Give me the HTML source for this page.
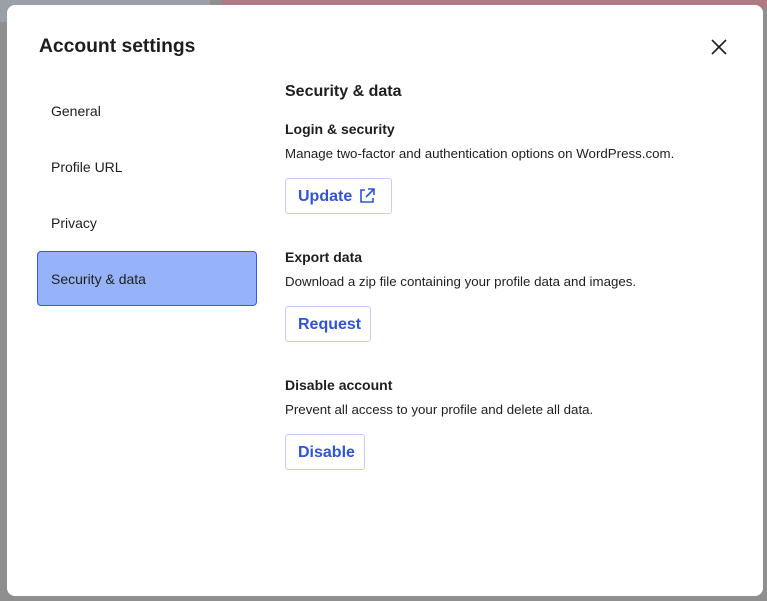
<!DOCTYPE html>
<html><head><meta charset="utf-8"><style>
html,body{margin:0;padding:0;width:767px;height:601px;overflow:hidden;background:#8f8f8f;font-family:"Liberation Sans",sans-serif;}
.topl{position:absolute;left:0;top:0;width:210px;height:22px;background:#9aa0a8}
.topr{position:absolute;left:222px;top:0;width:545px;height:8px;background:#b07a84}
.modal{position:absolute;left:7px;top:5px;width:756px;height:591px;background:#fff;border-radius:8px;}
.t{position:absolute;white-space:nowrap;color:#1e1e1e}
h1{position:absolute;left:32px;top:31px;margin:0;font-size:19.3px;font-weight:bold;color:#1e1e1e}
.nav{position:absolute;left:44px;font-size:14px;color:#1e1e1e}
.sel{position:absolute;left:30px;top:246px;width:220px;height:55px;box-sizing:border-box;background:#96b3fa;border:1.5px solid #3858e9;border-radius:4px}
.btn{position:absolute;left:278px;height:36px;border:1px solid #c5cff5;border-radius:3px;color:#2f55d4;font-size:16px;font-weight:bold;line-height:36px;padding:0 12px;box-sizing:border-box}
.h{font-size:14px;font-weight:bold}
.p{font-size:13.3px}
</style></head><body>
<div class="topl"></div><div class="topr"></div>
<div class="modal">
<h1>Account settings</h1>
<svg style="position:absolute;left:704px;top:34px" width="16" height="16" viewBox="0 0 16 16"><path d="M1 1L15 15M15 1L1 15" stroke="#1e1e1e" stroke-width="1.6"/></svg>
<div class="nav" style="top:98px">General</div>
<div class="nav" style="top:154px">Profile URL</div>
<div class="nav" style="top:210px">Privacy</div>
<div class="sel"></div>
<div class="nav" style="top:266px">Security &amp; data</div>
<div class="t" style="left:278px;top:78px;font-size:16px;font-weight:bold">Security &amp; data</div>
<div class="t h" style="left:278px;top:116px">Login &amp; security</div>
<div class="t p" style="left:278px;top:141px">Manage two-factor and authentication options on WordPress.com.</div>
<div class="btn" style="top:173px;width:107px">Update
<svg style="position:absolute;left:73px;top:9px" width="16" height="16" viewBox="0 0 16 16" fill="none" stroke="#2f55d4" stroke-width="1.6"><path d="M6 2H2v12h12v-4M9 1h6v6M15 1L7 9"/></svg></div>
<div class="t h" style="left:278px;top:244px">Export data</div>
<div class="t p" style="left:278px;top:269px">Download a zip file containing your profile data and images.</div>
<div class="btn" style="top:301px;width:86px">Request</div>
<div class="t h" style="left:278px;top:372px">Disable account</div>
<div class="t p" style="left:278px;top:397px">Prevent all access to your profile and delete all data.</div>
<div class="btn" style="top:429px;width:80px">Disable</div>
</div>
</body></html>
